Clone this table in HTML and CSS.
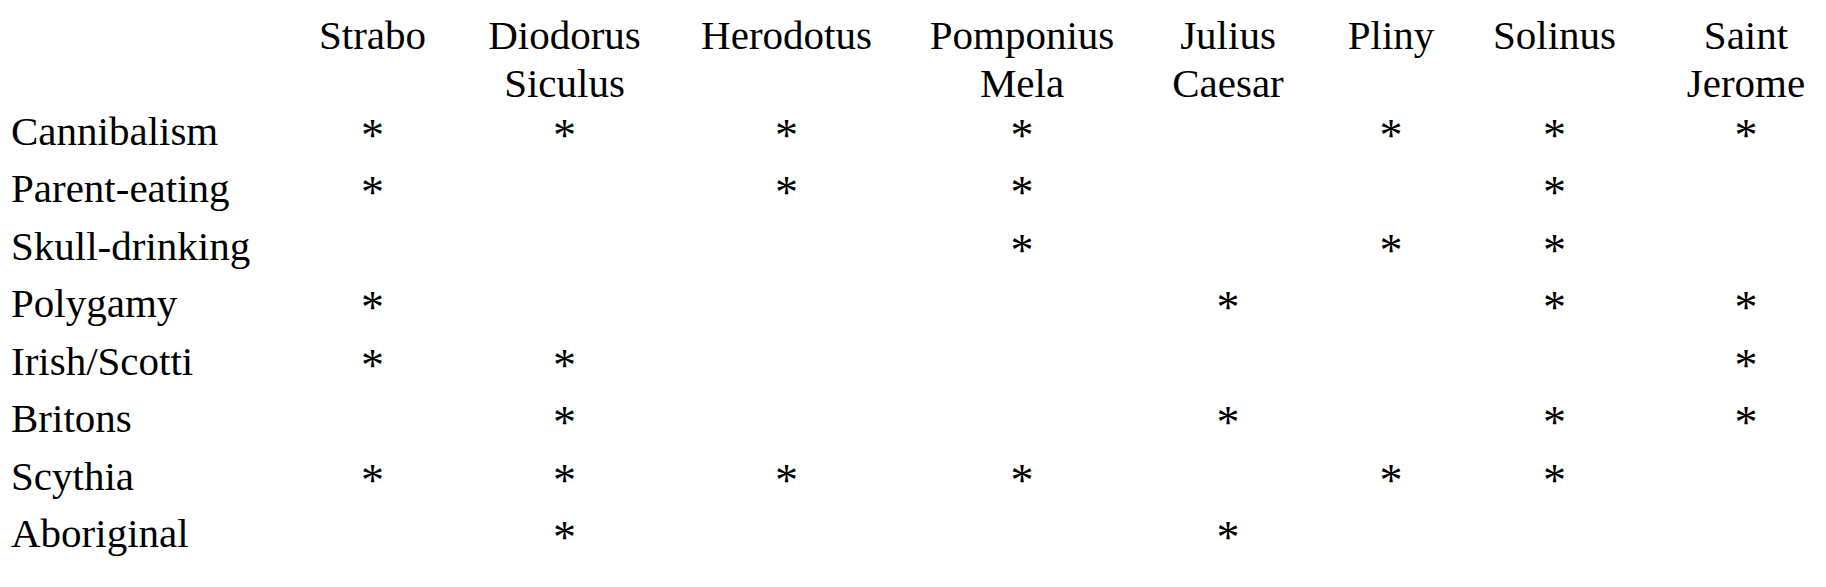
FILE: index.html
```html
<!DOCTYPE html>
<html lang="en">
<head>
<meta charset="utf-8">
<title>Sources table</title>
<link rel="stylesheet" href="styles.css">
</head>
<body>
<div class="page">
  <div class="table">
    <div class="th"></div>
    <div class="th">Strabo</div>
    <div class="th">Diodorus<br>Siculus</div>
    <div class="th">Herodotus</div>
    <div class="th">Pomponius<br>Mela</div>
    <div class="th">Julius<br>Caesar</div>
    <div class="th">Pliny</div>
    <div class="th">Solinus</div>
    <div class="th">Saint<br>Jerome</div>

    <div class="label">Cannibalism</div>
    <div class="cell"><span class="mark">*</span></div>
    <div class="cell"><span class="mark">*</span></div>
    <div class="cell"><span class="mark">*</span></div>
    <div class="cell"><span class="mark">*</span></div>
    <div class="cell"></div>
    <div class="cell"><span class="mark">*</span></div>
    <div class="cell"><span class="mark">*</span></div>
    <div class="cell"><span class="mark">*</span></div>

    <div class="label">Parent-eating</div>
    <div class="cell"><span class="mark">*</span></div>
    <div class="cell"></div>
    <div class="cell"><span class="mark">*</span></div>
    <div class="cell"><span class="mark">*</span></div>
    <div class="cell"></div>
    <div class="cell"></div>
    <div class="cell"><span class="mark">*</span></div>
    <div class="cell"></div>

    <div class="label">Skull-drinking</div>
    <div class="cell"></div>
    <div class="cell"></div>
    <div class="cell"></div>
    <div class="cell"><span class="mark">*</span></div>
    <div class="cell"></div>
    <div class="cell"><span class="mark">*</span></div>
    <div class="cell"><span class="mark">*</span></div>
    <div class="cell"></div>

    <div class="label">Polygamy</div>
    <div class="cell"><span class="mark">*</span></div>
    <div class="cell"></div>
    <div class="cell"></div>
    <div class="cell"></div>
    <div class="cell"><span class="mark">*</span></div>
    <div class="cell"></div>
    <div class="cell"><span class="mark">*</span></div>
    <div class="cell"><span class="mark">*</span></div>

    <div class="label">Irish/Scotti</div>
    <div class="cell"><span class="mark">*</span></div>
    <div class="cell"><span class="mark">*</span></div>
    <div class="cell"></div>
    <div class="cell"></div>
    <div class="cell"></div>
    <div class="cell"></div>
    <div class="cell"></div>
    <div class="cell"><span class="mark">*</span></div>

    <div class="label">Britons</div>
    <div class="cell"></div>
    <div class="cell"><span class="mark">*</span></div>
    <div class="cell"></div>
    <div class="cell"></div>
    <div class="cell"><span class="mark">*</span></div>
    <div class="cell"></div>
    <div class="cell"><span class="mark">*</span></div>
    <div class="cell"><span class="mark">*</span></div>

    <div class="label">Scythia</div>
    <div class="cell"><span class="mark">*</span></div>
    <div class="cell"><span class="mark">*</span></div>
    <div class="cell"><span class="mark">*</span></div>
    <div class="cell"><span class="mark">*</span></div>
    <div class="cell"></div>
    <div class="cell"><span class="mark">*</span></div>
    <div class="cell"><span class="mark">*</span></div>
    <div class="cell"></div>

    <div class="label">Aboriginal</div>
    <div class="cell"></div>
    <div class="cell"><span class="mark">*</span></div>
    <div class="cell"></div>
    <div class="cell"></div>
    <div class="cell"><span class="mark">*</span></div>
    <div class="cell"></div>
    <div class="cell"></div>
    <div class="cell"></div>
  </div>
</div>
</body>
</html>
```

FILE: styles.css
```css
html, body {
  margin: 0;
  padding: 0;
  background: #ffffff;
}

body {
  font-family: "Times New Roman", "Liberation Serif", Tinos, Times, "DejaVu Serif", serif;
  font-size: 41px;
  color: #000000;
}

.page {
  padding: 11px 0 0 11px;
}

.table {
  display: grid;
  grid-template-columns: 251px 221px 163px 281px 190px 222px 104px 223px 160px;
}

.th {
  line-height: 48.4px;
  text-align: center;
  white-space: nowrap;
}

.label,
.cell {
  height: 47px;
  line-height: 47px;
  padding-bottom: 10.5px;
  white-space: nowrap;
}

.cell {
  text-align: center;
}

.mark {
  display: inline-block;
  line-height: 0;
  font-size: 46px;
  transform: translateY(6px);
}
```
